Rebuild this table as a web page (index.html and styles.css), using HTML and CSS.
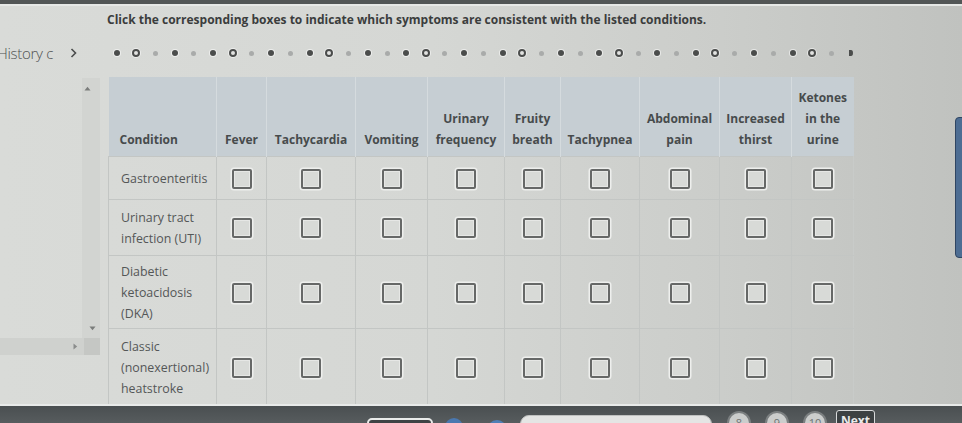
FILE: index.html
```html
<!DOCTYPE html>
<html>
<head>
<meta charset="utf-8">
<link rel="stylesheet" href="styles.css">
</head>
<body>
<div class="screen">
  <div class="topbar"></div>
  <div class="instructions">Click the corresponding boxes to indicate which symptoms are consistent with the listed conditions.</div>
  <div class="navrow">
    <div class="history">History c</div>
    <svg class="chev" width="7" height="10" viewBox="0 0 7 10"><path d="M1.5 1 L5.5 5 L1.5 9" fill="none" stroke="#4a4c4c" stroke-width="1.6"/></svg>
    <div class="dots">
      <span class="dc"><i class="d dark"></i></span><span class="dc"><i class="d ring"></i></span><span class="dc"><i class="d light"></i></span><span class="dc"><i class="d dark"></i></span><span class="dc"><i class="d light"></i></span>
      <span class="dc"><i class="d dark"></i></span><span class="dc"><i class="d ring"></i></span><span class="dc"><i class="d light"></i></span><span class="dc"><i class="d dark"></i></span><span class="dc"><i class="d light"></i></span>
      <span class="dc"><i class="d dark"></i></span><span class="dc"><i class="d ring"></i></span><span class="dc"><i class="d light"></i></span><span class="dc"><i class="d dark"></i></span><span class="dc"><i class="d light"></i></span>
      <span class="dc"><i class="d dark"></i></span><span class="dc"><i class="d ring"></i></span><span class="dc"><i class="d light"></i></span><span class="dc"><i class="d dark"></i></span><span class="dc"><i class="d light"></i></span>
      <span class="dc"><i class="d dark"></i></span><span class="dc"><i class="d ring"></i></span><span class="dc"><i class="d light"></i></span><span class="dc"><i class="d dark"></i></span><span class="dc"><i class="d light"></i></span>
      <span class="dc"><i class="d dark"></i></span><span class="dc"><i class="d ring"></i></span><span class="dc"><i class="d light"></i></span><span class="dc"><i class="d dark"></i></span><span class="dc"><i class="d light"></i></span>
      <span class="dc"><i class="d dark"></i></span><span class="dc"><i class="d ring"></i></span><span class="dc"><i class="d light"></i></span><span class="dc"><i class="d dark"></i></span><span class="dc"><i class="d light"></i></span>
      <span class="dc"><i class="d dark"></i></span><span class="dc"><i class="d ring"></i></span><span class="dc"><i class="d light"></i></span><span class="dc"><i class="d half"></i></span>
    </div>
  </div>
  <div class="main">
    <div class="side">
      <div class="side-v">
        <div class="track">
          <svg class="arr" width="7" height="5" viewBox="0 0 7 5"><path d="M0.5 4.5 L3.5 0.8 L6.5 4.5 Z" fill="#7a7c7b"/></svg>
          <svg class="arr" width="7" height="5" viewBox="0 0 7 5"><path d="M0.5 0.5 L3.5 4.2 L6.5 0.5 Z" fill="#7a7c7b"/></svg>
        </div>
      </div>
      <div class="side-h">
        <svg class="harr" width="5" height="7" viewBox="0 0 5 7"><path d="M0.5 0.5 L4.2 3.5 L0.5 6.5 Z" fill="#8a8c8b"/></svg>
        <span class="hbox"></span>
      </div>
    </div>
    <table class="grid">
      <colgroup>
        <col class="c-cond"><col class="c-fever"><col class="c-tachy"><col class="c-vom"><col class="c-uf"><col class="c-fb"><col class="c-tp"><col class="c-ab"><col class="c-it"><col class="c-ket">
      </colgroup>
      <thead>
        <tr class="rh">
          <th class="cond">Condition</th>
          <th>Fever</th>
          <th>Tachycardia</th>
          <th>Vomiting</th>
          <th>Urinary<br>frequency</th>
          <th>Fruity<br>breath</th>
          <th>Tachypnea</th>
          <th>Abdominal<br>pain</th>
          <th>Increased<br>thirst</th>
          <th>Ketones<br>in the<br>urine</th>
        </tr>
      </thead>
      <tbody>
        <tr class="r1">
          <td class="cond">Gastroenteritis</td>
          <td><span class="cb"></span></td><td><span class="cb"></span></td><td><span class="cb"></span></td><td><span class="cb"></span></td><td><span class="cb"></span></td><td><span class="cb"></span></td><td><span class="cb"></span></td><td><span class="cb"></span></td><td><span class="cb"></span></td>
        </tr>
        <tr class="r2">
          <td class="cond">Urinary tract<br>infection (UTI)</td>
          <td><span class="cb"></span></td><td><span class="cb"></span></td><td><span class="cb"></span></td><td><span class="cb"></span></td><td><span class="cb"></span></td><td><span class="cb"></span></td><td><span class="cb"></span></td><td><span class="cb"></span></td><td><span class="cb"></span></td>
        </tr>
        <tr class="r3">
          <td class="cond">Diabetic<br>ketoacidosis<br>(DKA)</td>
          <td><span class="cb"></span></td><td><span class="cb"></span></td><td><span class="cb"></span></td><td><span class="cb"></span></td><td><span class="cb"></span></td><td><span class="cb"></span></td><td><span class="cb"></span></td><td><span class="cb"></span></td><td><span class="cb"></span></td>
        </tr>
        <tr class="r4">
          <td class="cond">Classic<br>(nonexertional)<br>heatstroke</td>
          <td><span class="cb"></span></td><td><span class="cb"></span></td><td><span class="cb"></span></td><td><span class="cb"></span></td><td><span class="cb"></span></td><td><span class="cb"></span></td><td><span class="cb"></span></td><td><span class="cb"></span></td><td><span class="cb"></span></td>
        </tr>
      </tbody>
    </table>
  </div>
  <div class="bluetab"></div>
  <div class="footer">
    <span class="fbtn"></span>
    <span class="fblue b1"></span>
    <span class="fblue b2"></span>
    <span class="pages"><span>3</span><span>4</span><span>5</span><span>6</span><span>7</span></span>
    <span class="pc p8">8</span>
    <span class="pc p9">9</span>
    <span class="pc p10">10</span>
    <span class="next">Next</span>
  </div>
</div>
</body>
</html>
```

FILE: styles.css
```css
* { box-sizing: border-box; }
html, body { margin: 0; padding: 0; }
body {
  width: 962px;
  height: 423px;
  overflow: hidden;
  font-family: "Open Sans", "Noto Sans", sans-serif;
  background: linear-gradient(90deg, #d9dbd8 0%, #d5d7d4 45%, #cbcdca 75%, #c0c2bf 100%);
  color: #444;
}
.screen {
  position: relative;
  height: 423px;
  display: flex;
  flex-direction: column;
}
.topbar {
  flex: none;
  height: 6px;
  background: #525656;
  border-bottom: 2px solid #e6e8e6;
}
.instructions {
  flex: none;
  margin: 6px 0 0 107px;
  font-size: 12px;
  font-weight: 700;
  line-height: 16px;
  color: #3b3d3d;
  white-space: nowrap;
}
.navrow {
  flex: none;
  height: 20px;
  margin-top: 15px;
  display: flex;
  align-items: center;
}
.history {
  width: 73px;
  margin-left: -3px;
  font-size: 15px;
  font-weight: 300;
  color: #4e5151;
  white-space: nowrap;
  letter-spacing: -0.3px;
}
.chev { flex: none; }
.dots {
  display: flex;
  margin-left: 30px;
}
.dc {
  width: 19.32px;
  height: 10px;
  display: flex;
  align-items: center;
  justify-content: center;
}
.d { display: block; border-radius: 50%; }
.d.dark { width: 6px; height: 6px; background: #4b4d4c; box-shadow: 0 0 0 1px rgba(255,255,255,0.55); }
.d.ring { width: 8px; height: 8px; border: 2px solid #4b4d4c; background: #e2e3e1; box-shadow: 0 0 0 1px rgba(255,255,255,0.55); }
.d.light { width: 5px; height: 5px; background: #a9abaa; }
.d.half { width: 4px; height: 6px; background: #4b4d4c; border-radius: 0 50% 50% 0; }
.main {
  flex: none;
  height: 327px;
  margin-top: 14px;
  display: flex;
}
.side {
  width: 100px;
  flex: none;
  display: flex;
  flex-direction: column;
}
.side-v {
  height: 261px;
  display: flex;
  justify-content: flex-end;
  padding-top: 1px;
}
.track {
  width: 18px;
  height: 260px;
  background: #d2d4d1;
  display: flex;
  flex-direction: column;
  justify-content: space-between;
  align-items: center;
  padding: 8px 0 7px;
}
.track .arr:first-child { margin-right: 8px; }
.track .arr:last-child { margin-left: 2px; }
.side-h {
  height: 17px;
  display: flex;
  align-items: center;
  justify-content: flex-end;
  background: #cfd1ce;
}
.harr { margin-right: 6px; }
.hbox {
  width: 16px;
  height: 17px;
  background: #c5c7c4;
}
.grid {
  margin-left: 8px;
  width: 745px;
  height: 327px;
  border-collapse: collapse;
  table-layout: fixed;
}
.c-cond { width: 108px; }
.c-fever { width: 50px; }
.c-tachy { width: 89px; }
.c-vom { width: 72px; }
.c-uf { width: 77px; }
.c-fb { width: 56px; }
.c-tp { width: 79px; }
.c-ab { width: 80px; }
.c-it { width: 72px; }
.c-ket { width: 62px; }
.rh { height: 79px; }
.r1 { height: 43px; }
.r2 { height: 56px; }
.r3 { height: 73px; }
.r4 { height: 76px; }
th {
  background: #c6ced3;
  font-size: 12px;
  font-weight: 700;
  line-height: 21px;
  color: #474b4c;
  vertical-align: bottom;
  text-align: center;
  padding: 0 2px 6px;
  border-left: 1px solid #d5dbde;
  white-space: nowrap;
}
th:first-child { border-left: none; }
th.cond { text-align: left; padding-left: 11px; }
td {
  border: 1px solid #c3c6c4;
  text-align: center;
  vertical-align: middle;
  padding: 0;
}
td.cond {
  text-align: left;
  padding: 2px 0 0 12px;
  font-size: 12.4px;
  line-height: 21px;
  color: #545757;
  white-space: nowrap;
}
tbody tr:last-child td { border-bottom: none; }
tbody td:last-child { border-right: 1px solid #c8cbc9; }
.cb {
  display: inline-block;
  width: 20px;
  height: 20px;
  border: 2px solid #666867;
  border-radius: 2px;
  background: #d8dad7;
  box-shadow: 0 0 0 1.5px #eeefed, inset 0 0 0 1px #e6e7e5;
  vertical-align: middle;
}
.bluetab {
  position: absolute;
  right: -4px;
  top: 117px;
  width: 11px;
  height: 141px;
  background: #4d6d93;
  border: 1px solid #2f4562;
  border-radius: 4px;
}
.footer {
  flex: 1;
  display: flex;
  align-items: flex-start;
  overflow: hidden;
  background: linear-gradient(180deg, #4a4f51, #575c5e);
  border-top: 2px solid #e8eae9;
}
.fbtn {
  flex: none;
  margin: 12px 0 0 367px;
  width: 66px;
  height: 20px;
  border: 2px solid #e9ebea;
  border-radius: 5px;
  background: #3e4345;
}
.fblue {
  flex: none;
  border-radius: 50%;
  background: #4a78b0;
}
.b1 { margin: 12px 0 0 12px; width: 18px; height: 18px; }
.b2 { margin: 14px 0 0 24px; width: 20px; height: 20px; background: #4f7fb6; }
.pages {
  flex: none;
  margin: 9px 0 0 13px;
  width: 192px;
  height: 26px;
  border-radius: 9px;
  background: #e4e5e4;
  border: 1px solid #bfc1c0;
  display: flex;
  justify-content: space-around;
  padding: 3px 6px 0;
  font-size: 11px;
  color: #6b6e6e;
}
.pc {
  flex: none;
  width: 24px;
  height: 24px;
  margin-top: 5px;
  border-radius: 50%;
  background: #cbcdcc;
  border: 2px solid #7b7f80;
  font-size: 11px;
  line-height: 20px;
  text-align: center;
  color: #707373;
}
.p8 { margin-left: 15px; }
.p9 { margin-left: 14px; }
.p10 { margin-left: 14px; }
.next {
  flex: none;
  margin: 4px 0 0 9px;
  width: 39px;
  height: 22px;
  border: 1px solid #d8dadb;
  border-radius: 3px;
  background: #3c4143;
  color: #e8eaea;
  font-size: 12px;
  font-weight: 700;
  text-align: center;
  line-height: 20px;
}
```
